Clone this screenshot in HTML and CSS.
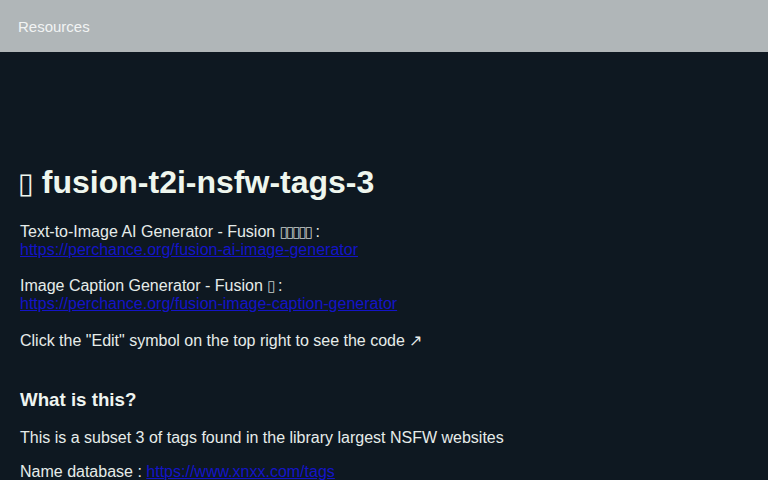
FILE: index.html
```html
<!DOCTYPE html>
<html>
<head>
<meta charset="utf-8">
<link rel="stylesheet" href="styles.css">
</head>
<body>
<header class="topbar"><span class="nav-item">Resources</span></header>
<main class="content">
  <h1 class="title"><span class="tofu-lg">▯</span> fusion-t2i-nsfw-tags-3</h1>
  <p class="para p1">Text-to-Image AI Generator - Fusion <span class="tofu">▯▯▯▯▯</span> :<br><a href="#">https://perchance.org/fusion-ai-image-generator</a></p>
  <p class="para p2">Image Caption Generator - Fusion <span class="tofu">▯</span> :<br><a href="#">https://perchance.org/fusion-image-caption-generator</a></p>
  <p class="para p3">Click the "Edit" symbol on the top right to see the code ↗</p>
  <h3 class="subtitle">What is this?</h3>
  <p class="para p4">This is a subset 3 of tags found in the library largest NSFW websites</p>
  <p class="para p5">Name database : <a href="#">https://www.xnxx.com/tags</a></p>
</main>
</body>
</html>
```
FILE: styles.css
```css
html, body {
  margin: 0;
  padding: 0;
  background: #0e1821;
  font-family: "Liberation Sans", Arial, sans-serif;
  color: #e6ecea;
}
.topbar {
  height: 52px;
  background: #b0b6b8;
  display: flex;
  align-items: center;
  padding-left: 18px;
}
.nav-item {
  color: #f2f4f4;
  font-size: 15px;
}
.content {
  padding: 0 20px;
}
.title {
  margin: 110px 0 0 0;
  font-size: 32px;
  line-height: 40px;
  color: #eef6ee;
}
.tofu-lg {
  font-family: "DejaVu Sans", sans-serif;
  font-weight: normal;
  font-size: 29px;
  line-height: 0;
  margin-left: -2px;
  letter-spacing: -1px;
}
.tofu {
  font-family: "DejaVu Sans", sans-serif;
  font-size: 15px;
  line-height: 0;
  letter-spacing: -2px;
  color: #c8cecc;
}
.para {
  font-size: 16px;
  line-height: 18px;
  margin: 0;
}
.p1 { margin-top: 21px; }
.p2 { margin-top: 18px; }
.p3 { margin-top: 19px; }
.p4 { margin-top: 18px; }
.p5 { margin-top: 16px; }
.para a {
  color: #1414c8;
  text-decoration: underline;
}
.subtitle {
  font-size: 18.72px;
  line-height: 22px;
  margin: 39px 0 0 0;
  color: #eef4f0;
}
```
